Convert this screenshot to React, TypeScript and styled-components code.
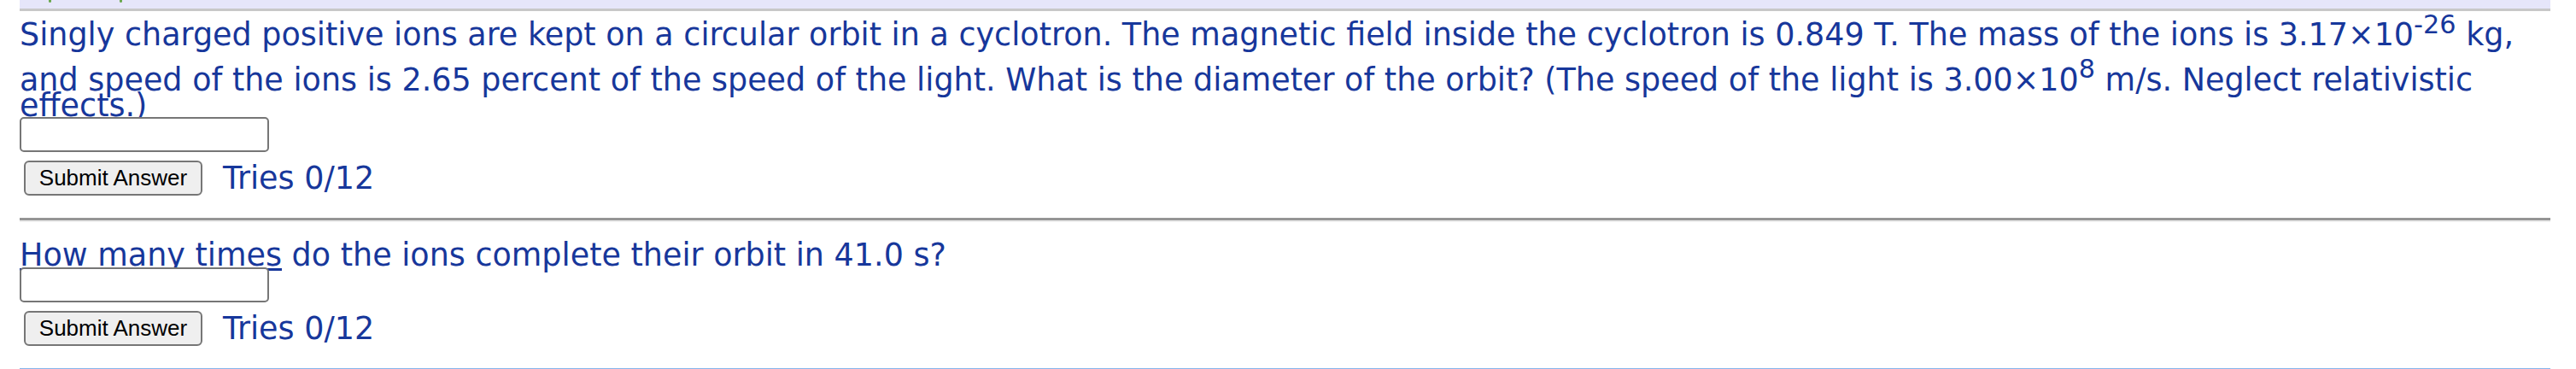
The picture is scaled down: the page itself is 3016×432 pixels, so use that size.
import React from 'react';
import styled, { createGlobalStyle } from 'styled-components';

const GlobalStyle = createGlobalStyle`
    html, body {
        margin: 0;
        padding: 0;
        background: #ffffff;
    }
    body {
        font-family: "DejaVu Sans", Verdana, sans-serif;
    }
`

const Page = styled.div`
    width: 2963px;
    margin-left: 23px;
    display: flex;
    flex-direction: column;
`

const TopBand = styled.div`
    position: relative;
    height: 10px;
    background-color: #e6e6fa;
    border-bottom: 3px solid #c8c8c8;
`

const Sprout = styled.span<{ left: number }>`
    position: absolute;
    top: 0;
    left: ${p => p.left}px;
    width: 3px;
    height: 3px;
    border-radius: 0 0 2px 2px;
    background-color: #6aa84f;
`

const Question = styled.p<{ top: number }>`
    position: relative;
    margin: ${p => p.top}px 0 0 0;
    font-size: 36.5px;
    line-height: 31px;
    color: #17379b;
    sup {
        display: inline-block;
        font-size: 0.83em;
        line-height: 1;
        padding-top: 10.5px;
        vertical-align: 14px;
    }
`

const Link = styled.span`
    text-decoration: underline;
    text-underline-offset: 3px;
`

const AnswerBox = styled.input<{ top: number }>`
    position: relative;
    display: block;
    box-sizing: border-box;
    width: 292px;
    height: 41px;
    margin: ${p => p.top}px 0 0 0;
    border: 2px solid #767676;
    border-radius: 5px;
    background: #ffffff;
    padding: 2px 6px;
    font-size: 26px;
    outline: none;
`

const SubmitRow = styled.div`
    display: flex;
    align-items: center;
    gap: 24px;
    margin-top: 9px;
    padding-left: 5px;
`

const SubmitButton = styled.button`
    box-sizing: border-box;
    width: 209px;
    height: 41px;
    padding: 0;
    border: 2px solid #767676;
    border-radius: 6px;
    background-color: #efefef;
    color: #000000;
    font-family: "Liberation Sans", Arial, sans-serif;
    font-size: 26px;
`

const Tries = styled.span`
    font-size: 36.5px;
    color: #17379b;
`

const Divider = styled.div`
    height: 3px;
    margin-top: 25px;
    background-color: #959595;
    border-bottom: 2px solid #ededed;
`

const BottomRule = styled.div`
    height: 2px;
    margin-top: 25px;
    background-color: #86b4ec;
`

function Part({ children, boxTop }: { children: React.ReactNode; boxTop: number }) {
    return (
        <>
            {children}
            <AnswerBox type="text" top={boxTop} />
            <SubmitRow>
                <SubmitButton type="button">Submit Answer</SubmitButton>
                <Tries>Tries 0/12</Tries>
            </SubmitRow>
        </>
    );
}

export default function App() {
    return (
        <Page>
            <GlobalStyle />
            <TopBand>
                <Sprout left={34} />
                <Sprout left={117} />
            </TopBand>
            <Part boxTop={-2}>
                <Question top={-10}>
                    Singly charged positive ions are kept on a circular orbit in a cyclotron. The magnetic field inside the cyclotron is 0.849 T. The mass of the ions is 3.17×10<sup>-26</sup> kg, and speed of the ions is 2.65 percent of the speed of the light. What is the diameter of the orbit? (The speed of the light is 3.00×10<sup>8</sup> m/s. Neglect relativistic effects.)
                </Question>
            </Part>
            <Divider />
            <Part boxTop={-1}>
                <Question top={23}>
                    <Link>How many times</Link> do the ions complete their orbit in 41.0 s?
                </Question>
            </Part>
            <BottomRule />
        </Page>
    );
}
